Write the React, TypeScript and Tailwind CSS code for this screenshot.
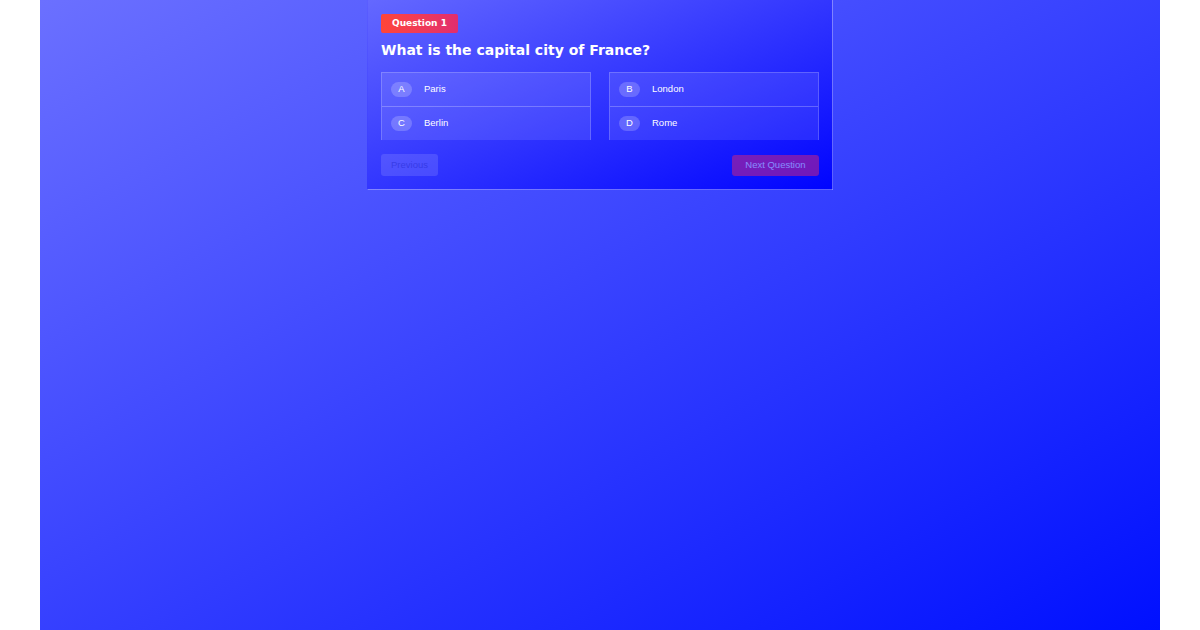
import React from "react";

interface Option {
  letter: string;
  label: string;
}

const columns: Option[][] = [
  [
    { letter: "A", label: "Paris" },
    { letter: "C", label: "Berlin" },
  ],
  [
    { letter: "B", label: "London" },
    { letter: "D", label: "Rome" },
  ],
];

const OptionRow: React.FC<{ option: Option; last: boolean }> = ({ option, last }) => (
  <button
    className={`flex h-[33.5px] w-full items-center gap-3 px-[9px] text-left ${
      last ? "" : "border-b border-white/25"
    }`}
  >
    <span className="flex h-[15px] w-[21px] items-center justify-center rounded-full bg-white/20 text-[9.5px] text-white">
      {option.letter}
    </span>
    <span className="text-[9.5px] text-white">{option.label}</span>
  </button>
);

export default function App() {
  return (
    <div className="mx-auto h-[630px] max-w-[1120px] bg-[linear-gradient(to_bottom_right,#6b70ff,#0010ff)] font-['Liberation_Sans',Arial,sans-serif]">
      <div className="mx-auto w-[466px] border border-t-0 border-white/20 bg-[linear-gradient(to_bottom_right,#6468ff,#0004ff)] px-[13px] pb-[13px] pt-[14px]">
        <div className="flex h-[19px] w-fit items-center rounded-[2px] bg-gradient-to-r from-[#ff4536] to-[#e12d6e] px-[11px] font-['DejaVu_Sans',sans-serif] text-[9px] font-bold text-white">
          Question 1
        </div>
        <h2 className="mt-[7px] font-['DejaVu_Sans',sans-serif] text-[14px] font-bold leading-[20px] text-white">
          What is the capital city of France?
        </h2>
        <div className="mt-[12px] grid grid-cols-2 gap-[18px]">
          {columns.map((col, i) => (
            <div key={i} className="border border-b-0 border-white/20 bg-white/10">
              {col.map((o, j) => (
                <OptionRow key={o.letter} option={o} last={j === col.length - 1} />
              ))}
            </div>
          ))}
        </div>
        <div className="mt-[14px] flex items-center justify-between">
          <button
            disabled
            className="h-[22px] rounded-[3px] bg-white/25 px-[10px] text-[9.5px] text-[#3a3fd0] opacity-50"
          >
            Previous
          </button>
          <button className="h-[21px] rounded-[3px] bg-[#db2777] px-[13.5px] text-[9.5px] text-white opacity-50">
            Next Question
          </button>
        </div>
      </div>
    </div>
  );
}
